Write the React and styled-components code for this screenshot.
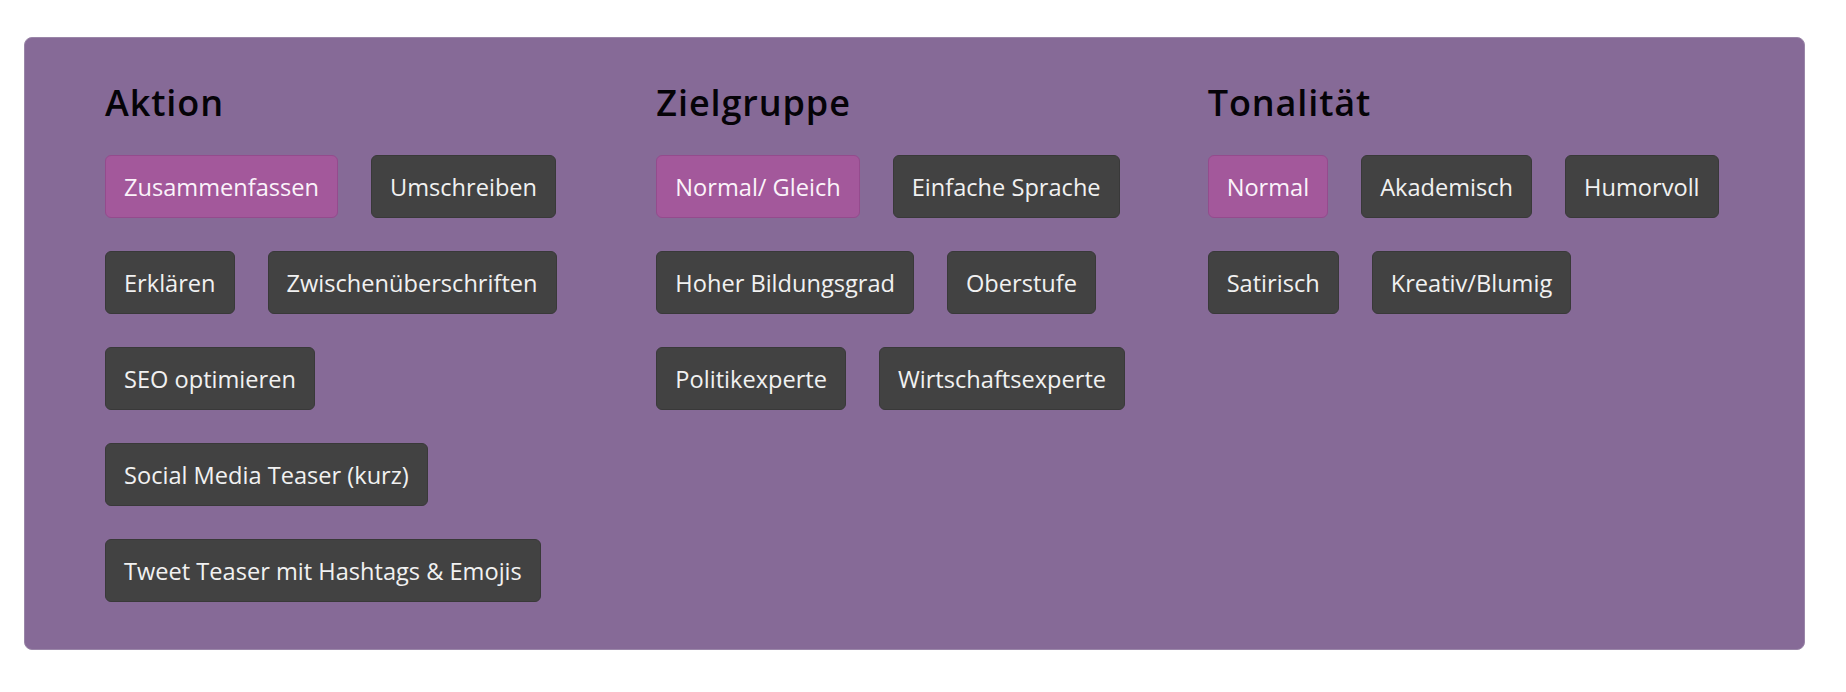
import styled, { createGlobalStyle } from "styled-components";

const GlobalStyle = createGlobalStyle`
    html, body {
        margin: 0;
        padding: 0;
        background-color: #ffffff;
        font-family: 'Open Sans', 'Liberation Sans', sans-serif;
    }
`;

const groups = [
    {
        title: 'Aktion',
        options: [
            'Zusammenfassen',
            'Umschreiben',
            'Erklären',
            'Zwischenüberschriften',
            'SEO optimieren',
            'Social Media Teaser (kurz)',
            'Tweet Teaser mit Hashtags & Emojis',
        ],
        selected: 'Zusammenfassen',
    },
    {
        title: 'Zielgruppe',
        options: [
            'Normal/ Gleich',
            'Einfache Sprache',
            'Hoher Bildungsgrad',
            'Oberstufe',
            'Politikexperte',
            'Wirtschaftsexperte',
        ],
        selected: 'Normal/ Gleich',
    },
    {
        title: 'Tonalität',
        options: [
            'Normal',
            'Akademisch',
            'Humorvoll',
            'Satirisch',
            'Kreativ/Blumig',
        ],
        selected: 'Normal',
    },
];

export default function App() {
    return (
        <>
            <GlobalStyle />
            <Page>
                <Panel>
                    {groups.map((group) => {
                        return (
                            <Column key={group.title}>
                                <Title>{group.title}</Title>
                                <Options>
                                    {group.options.map((option) => (
                                        <Option key={option} $active={option === group.selected}>
                                            {option}
                                        </Option>
                                    ))}
                                </Options>
                            </Column>
                        );
                    })}
                </Panel>
            </Page>
        </>
    );
}

const Page = styled.div`
    width: 100%;
    box-sizing: border-box;
    padding: 37px 41px 40px 24px;
`;

const Panel = styled.div`
    box-sizing: border-box;
    width: 100%;
    background-color: #866a97;
    border: 1px solid #9a86a8;
    border-radius: 8px;
    padding: 47px 57px 47px 80px;
    display: grid;
    grid-template-columns: repeat(3, 1fr);
    column-gap: 12px;
    align-items: start;
`;

const Column = styled.div`
    display: flex;
    flex-direction: column;
`;

const Title = styled.h2`
    margin: 0 0 34px 0;
    font-family: 'Open Sans', 'Liberation Sans', sans-serif;
    font-size: 36px;
    line-height: 36px;
    font-weight: 600;
    letter-spacing: 0.9px;
    color: #050308;
`;

const Options = styled.div`
    display: flex;
    flex-wrap: wrap;
    gap: 33px 33px;
`;

const Option = styled.div`
    box-sizing: border-box;
    height: 63px;
    padding: 0 18px;
    display: inline-flex;
    align-items: center;
    border-radius: 6px;
    border: 1px solid ${(props) => (props.$active ? '#944b8d' : '#393939')};
    background-color: ${(props) => (props.$active ? '#a3589b' : '#424242')};
    color: ${(props) => (props.$active ? '#fbf3fa' : '#f1f1f1')};
    font-family: 'Open Sans', 'Liberation Sans', sans-serif;
    font-size: 23.6px;
    font-weight: 400;
    white-space: nowrap;
    cursor: pointer;
`;
